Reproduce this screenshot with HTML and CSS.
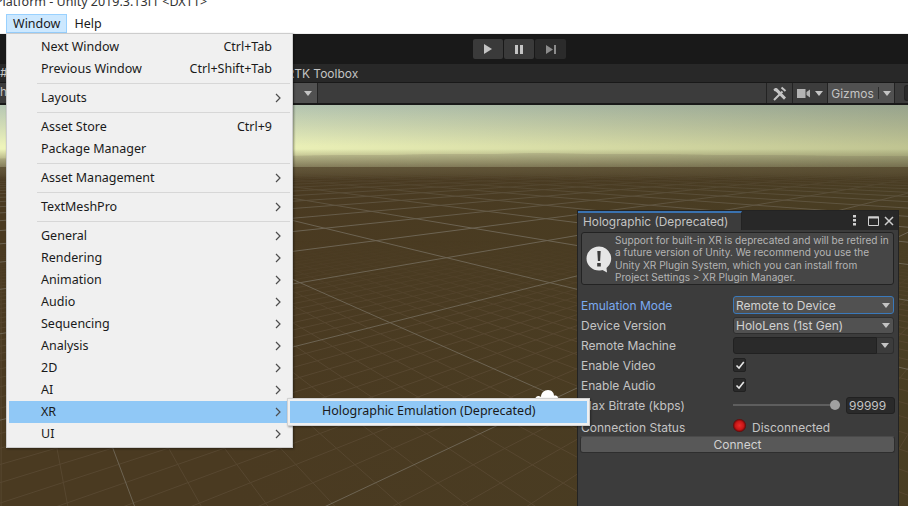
FILE: index.html
```html
<!DOCTYPE html>
<html lang="en">
<head>
    <meta charset="UTF-8">
    <meta name="viewport" content="width=device-width, initial-scale=1.0">
    <title>Unity - Window menu</title>
    <link rel="stylesheet" href="styles.css">
</head>
<body>
    <svg class="defs" width="0" height="0">
        <symbol id="chev" viewBox="0 0 6 10"><path d="M1 1l4 4-4 4" fill="none" stroke="#4d4d4d" stroke-width="1.2"/></symbol>
        <symbol id="tri" viewBox="0 0 8 5"><path d="M0 0h8L4 5z" fill="#c4c4c4"/></symbol>
        <symbol id="tick" viewBox="0 0 10 10"><path d="M1.5 5.5L4 8l4.8-6" fill="none" stroke="#e4e4e4" stroke-width="1.6"/></symbol>
    </svg>

    <div class="app">
        <div class="titlebar"><span>Platform - Unity 2019.3.13f1 &lt;DX11&gt;</span></div>

        <div class="menubar">
            <span class="menubar-item open">Window</span>
            <span class="menubar-item">Help</span>
        </div>

        <div class="toolbar">
            <div class="play-btn">
                <svg width="10" height="12" viewBox="0 0 10 12"><path d="M1 1v10l8-5z" fill="#c4c4c4"/></svg>
            </div>
            <div class="play-btn">
                <svg width="10" height="11" viewBox="0 0 10 11"><path d="M1 1h3v9H1zM6 1h3v9H6z" fill="#c4c4c4"/></svg>
            </div>
            <div class="play-btn step">
                <svg width="12" height="11" viewBox="0 0 12 11"><path d="M1 1v9l7-4.500zM9 1h2v9H9z" fill="#8c8c8c"/></svg>
            </div>
        </div>

        <div class="tabstrip">
            <span class="tab-stub">#</span>
            <span class="tab-label">MRTK Toolbox</span>
        </div>

        <div class="scene-toolbar">
            <span class="tab-stub">h</span>
            <div class="scene-drop">
                <svg class="tri" width="8" height="5"><use href="#tri"/></svg>
            </div>
            <div class="scene-tools">
                <div class="scene-tool tools">
                    <svg width="15" height="15" viewBox="0 0 15 15">
                        <path d="M2 14L10.500 5.500M9.500 1.500l4 3.500" fill="none" stroke="#c4c4c4" stroke-width="2"/>
                        <path d="M1.500 3.500c1-1.800 3.500-2 4.300-.6L14 11.500 12 13.800 3.800 5.500C2.800 5.600 1.800 4.700 1.500 3.500z" fill="#c4c4c4"/>
                    </svg>
                </div>
                <div class="scene-tool camera">
                    <svg width="13" height="9" viewBox="0 0 13 9"><path d="M0 0h8.500v9H0zM9.500 3L13 .5v8L9.500 6z" fill="#b4b4b4"/></svg>
                    <svg class="tri" width="8" height="5"><use href="#tri"/></svg>
                </div>
                <div class="scene-tool gizmos">
                    <span>Gizmos</span>
                    <i class="gizmos-sep"></i>
                    <svg class="tri" width="8" height="5"><use href="#tri"/></svg>
                </div>
                <div class="scene-search"></div>
            </div>
        </div>

        <div class="scene">
            <svg class="ground-grid" id="ground-grid" viewBox="0 104 908 402" width="908" height="402">
                <defs>
                    <linearGradient id="minor-fade" gradientUnits="userSpaceOnUse" x1="0" y1="240" x2="0" y2="320">
                        <stop offset="0" stop-color="#000"/>
                        <stop offset="1" stop-color="#fff"/>
                    </linearGradient>
                    <linearGradient id="major-fade" gradientUnits="userSpaceOnUse" x1="0" y1="178" x2="0" y2="225">
                        <stop offset="0" stop-color="#333"/>
                        <stop offset="1" stop-color="#fff"/>
                    </linearGradient>
                    <mask id="minor-mask" maskUnits="userSpaceOnUse" x="0" y="104" width="908" height="402">
                        <rect x="0" y="104" width="908" height="402" fill="url(#minor-fade)"/>
                    </mask>
                    <mask id="major-mask" maskUnits="userSpaceOnUse" x="0" y="104" width="908" height="402">
                        <rect x="0" y="104" width="908" height="402" fill="url(#major-fade)"/>
                    </mask>
                </defs>
                <g id="grid-minor" mask="url(#minor-mask)"></g>
                <g id="grid-major" mask="url(#major-mask)"></g>
            </svg>
            <div class="horizon"></div>
            <svg class="scene-camera" width="30" height="20" viewBox="0 0 30 20">
                <path d="M3 20c-3-2-3-7 1-8 1 0 2 0 3 1 0-4 3-7 7-7s6 3 6 6c2-1 4 0 4 2 2 0 4 1 4 3v3z" fill="#fff"/>
            </svg>
        </div>

        <div class="menu">
            <div class="menu-row"><span>Next Window</span><span class="shortcut">Ctrl+Tab</span></div>
            <div class="menu-row"><span>Previous Window</span><span class="shortcut">Ctrl+Shift+Tab</span></div>
            <div class="menu-sep"></div>
            <div class="menu-row"><span>Layouts</span><svg class="chev" width="6" height="10"><use href="#chev"/></svg></div>
            <div class="menu-sep"></div>
            <div class="menu-row"><span>Asset Store</span><span class="shortcut">Ctrl+9</span></div>
            <div class="menu-row"><span>Package Manager</span></div>
            <div class="menu-sep"></div>
            <div class="menu-row"><span>Asset Management</span><svg class="chev" width="6" height="10"><use href="#chev"/></svg></div>
            <div class="menu-sep"></div>
            <div class="menu-row"><span>TextMeshPro</span><svg class="chev" width="6" height="10"><use href="#chev"/></svg></div>
            <div class="menu-sep"></div>
            <div class="menu-row"><span>General</span><svg class="chev" width="6" height="10"><use href="#chev"/></svg></div>
            <div class="menu-row"><span>Rendering</span><svg class="chev" width="6" height="10"><use href="#chev"/></svg></div>
            <div class="menu-row"><span>Animation</span><svg class="chev" width="6" height="10"><use href="#chev"/></svg></div>
            <div class="menu-row"><span>Audio</span><svg class="chev" width="6" height="10"><use href="#chev"/></svg></div>
            <div class="menu-row"><span>Sequencing</span><svg class="chev" width="6" height="10"><use href="#chev"/></svg></div>
            <div class="menu-row"><span>Analysis</span><svg class="chev" width="6" height="10"><use href="#chev"/></svg></div>
            <div class="menu-row"><span>2D</span><svg class="chev" width="6" height="10"><use href="#chev"/></svg></div>
            <div class="menu-row"><span>AI</span><svg class="chev" width="6" height="10"><use href="#chev"/></svg></div>
            <div class="menu-row active"><span>XR</span><svg class="chev" width="6" height="10"><use href="#chev"/></svg></div>
            <div class="menu-row"><span>UI</span><svg class="chev" width="6" height="10"><use href="#chev"/></svg></div>
        </div>

        <div class="panel">
            <div class="panel-head">
                <div class="panel-tab">Holographic (Deprecated)</div>
                <div class="panel-actions">
                    <svg class="kebab" width="3" height="11" viewBox="0 0 3 11"><path d="M0 0h3v2.500H0zM0 4h3v2.500H0zM0 8h3v2.500H0z" fill="#d0d0d0"/></svg>
                    <svg width="11" height="10" viewBox="0 0 11 10"><path d="M.5 1h10v8.500H.5z" fill="none" stroke="#d0d0d0"/><path d="M0 .5h11v2H0z" fill="#d0d0d0"/></svg>
                    <svg width="10" height="10" viewBox="0 0 10 10"><path d="M1 1l8 8M9 1l-8 8" stroke="#d0d0d0" stroke-width="1.500"/></svg>
                </div>
            </div>

            <div class="help-box">
                <svg width="28" height="28" viewBox="0 0 28 28">
                    <path d="M14 1.500a12.500 12 0 1 0 0 24c1.500 0 3-.3 3.500-.5l4.500 2.500-.5-4.500A12 12 0 0 0 14 1.500z" fill="#e6e6e6"/>
                    <path d="M12.300 6h3.400l-.6 10h-2.200zM12.200 18h3.600v3.500h-3.600z" fill="#3c3c3c"/>
                </svg>
                <p>Support for built-in XR is deprecated and will be retired in a future version of Unity. We recommend you use the Unity XR Plugin System, which you can install from Project Settings &gt; XR Plugin Manager.</p>
            </div>

            <div class="fields">
                <div class="field-row">
                    <label class="focused">Emulation Mode</label>
                    <div class="select focused"><span>Remote to Device</span><svg class="tri" width="8" height="5"><use href="#tri"/></svg></div>
                </div>
                <div class="field-row">
                    <label>Device Version</label>
                    <div class="select"><span>HoloLens (1st Gen)</span><svg class="tri" width="8" height="5"><use href="#tri"/></svg></div>
                </div>
                <div class="field-row">
                    <label>Remote Machine</label>
                    <div class="combo">
                        <div class="combo-input"></div>
                        <div class="combo-btn"><svg class="tri" width="8" height="5"><use href="#tri"/></svg></div>
                    </div>
                </div>
                <div class="field-row">
                    <label>Enable Video</label>
                    <div class="check"><svg width="10" height="10"><use href="#tick"/></svg></div>
                </div>
                <div class="field-row">
                    <label>Enable Audio</label>
                    <div class="check"><svg width="10" height="10"><use href="#tick"/></svg></div>
                </div>
                <div class="field-row">
                    <label>Max Bitrate (kbps)</label>
                    <div class="slider">
                        <div class="slider-track"><i class="slider-thumb"></i></div>
                        <div class="slider-value">99999</div>
                    </div>
                </div>
                <div class="field-row status-row">
                    <label>Connection Status</label>
                    <div class="status"><i class="led"></i><span>Disconnected</span></div>
                </div>
            </div>

            <div class="connect-btn">Connect</div>
        </div>

        <div class="submenu">
            <div class="submenu-row">Holographic Emulation (Deprecated)</div>
        </div>
    </div>

    <script src="grid.js"></script>
</body>
</html>
```

FILE: styles.css
```css
html, body {
    margin: 0;
    padding: 0;
}
body {
    width: 908px;
    height: 506px;
    overflow: hidden;
    background: #fff;
}
.defs {
    position: absolute;
}
.app {
    position: relative;
    width: 908px;
    height: 506px;
    display: flex;
    flex-direction: column;
    overflow: hidden;
    font-family: Inter, "Noto Sans", sans-serif;
    font-size: 12px;
    color: #c4c4c4;
}

/* window chrome */
.titlebar {
    height: 14px;
    background: #fff;
    color: #333;
    font-family: "Noto Sans", sans-serif;
    font-size: 12.5px;
    line-height: 14px;
    overflow: hidden;
}
.titlebar span {
    display: block;
    margin: -5px 0 0 -5px;
    white-space: pre;
}
.menubar {
    height: 19px;
    background: #fff;
    border-bottom: 1px solid #f0f0f0;
    display: flex;
    padding-left: 6px;
    font-family: "Noto Sans", sans-serif;
    font-size: 12.5px;
    color: #1a1a1a;
}
.menubar-item {
    padding: 0 6px;
    border: 1px solid transparent;
    line-height: 17px;
}
.menubar-item.open {
    background: #cce8ff;
    border-color: #99d1ff;
}
.toolbar {
    height: 30px;
    background: #191919;
    display: flex;
    gap: 1px;
    align-items: center;
    padding-left: 473px;
}
.play-btn {
    width: 30px;
    height: 20px;
    background: #3a3a3a;
    display: flex;
    align-items: center;
    justify-content: center;
    border-radius: 2px;
}
.play-btn.step {
    width: 31px;
    background: #2b2b2b;
}
.tabstrip {
    height: 18px;
    background: #282828;
    border-bottom: 1px solid #191919;
    display: flex;
    align-items: center;
}
.tab-stub {
    line-height: 18px;
    color: #c4c4c4;
}
.tab-label {
    margin-left: 268px;
}
.scene-toolbar {
    height: 20px;
    background: #3c3c3c;
    border-bottom: 2px solid #191919;
    display: flex;
    align-items: stretch;
}
.scene-drop {
    margin-left: 287px;
    width: 24px;
    background: #515151;
    border-right: 1px solid #232323;
    display: flex;
    align-items: center;
    justify-content: flex-end;
    padding-right: 5px;
    box-sizing: border-box;
}
.scene-tools {
    margin-left: auto;
    display: flex;
}
.scene-tool {
    display: flex;
    align-items: center;
    justify-content: center;
    border-left: 1px solid #232323;
    box-sizing: border-box;
}
.tools {
    width: 26px;
}
.camera {
    width: 35px;
    gap: 5px;
}
.gizmos {
    width: 68px;
    background: #515151;
    gap: 4px;
    border-right: 1px solid #232323;
}
.gizmos-sep {
    width: 1px;
    height: 12px;
    background: #2e2e2e;
}
.scene-search {
    width: 3px;
    margin: 2px 0 2px 9px;
    background: #2a2a2a;
    border-radius: 3px 0 0 3px;
    border: 1px solid #232323;
    border-right: none;
}

/* scene view */
.scene {
    position: relative;
    flex: 1;
    overflow: hidden;
    background:
        linear-gradient(90deg, rgba(70, 70, 40, 0) 25%, rgba(70, 70, 40, 0.28) 100%),
        linear-gradient(#b6c7b4 0, #d3ddb6 22px, #eef4ba 41px, #eef4ba 44px, #4a3a21 74px, #4a3a21 100%);
}
.ground-grid {
    position: absolute;
    left: 0;
    top: 0;
}
.horizon {
    position: absolute;
    left: 0;
    right: 0;
    top: 62px;
    height: 24px;
    background: linear-gradient(rgba(74, 58, 33, 0.6), rgba(74, 58, 33, 0));
}
.scene-camera {
    position: absolute;
    left: 534px;
    top: 279px;
}

/* window menu */
.menu {
    position: absolute;
    left: 6px;
    top: 33px;
    width: 287px;
    box-sizing: border-box;
    padding: 2px;
    background: #f0f0f0;
    border: 1px solid #cdcdcd;
    box-shadow: 1px 1px 2px rgba(0, 0, 0, 0.4);
    font-family: "Noto Sans", sans-serif;
    font-size: 12.5px;
    color: #1a1a1a;
}
.menu-row {
    height: 22px;
    box-sizing: border-box;
    padding: 0 9px 1px 32px;
    display: flex;
    align-items: center;
    position: relative;
}
.menu-row.active {
    background: #90c8f6;
}
.shortcut {
    margin-left: auto;
    margin-right: 9px;
}
.chev {
    margin-left: auto;
}
.menu-sep {
    height: 1px;
    margin: 3px 0 3px 28px;
    background: #d7d7d7;
}
.submenu {
    position: absolute;
    left: 287px;
    top: 398px;
    width: 303px;
    box-sizing: border-box;
    padding: 2px;
    background: #f0f0f0;
    border: 1px solid #d2d2d2;
    box-shadow: 1px 1px 2px rgba(0, 0, 0, 0.4);
    font-family: "Noto Sans", sans-serif;
    font-size: 12.5px;
    color: #1a1a1a;
}
.submenu-row {
    height: 22px;
    line-height: 20px;
    padding-left: 32px;
    background: #90c8f6;
}

/* holographic panel */
.panel {
    position: absolute;
    left: 577px;
    top: 210px;
    width: 322px;
    bottom: 0;
    background: #3c3c3c;
    border: 1px solid #232323;
    border-bottom: none;
    box-sizing: border-box;
}
.panel-head {
    height: 19px;
    background: #282828;
    display: flex;
    align-items: stretch;
}
.panel-tab {
    width: 164px;
    box-sizing: border-box;
    background: #3c3c3c;
    border-top: 2px solid #3a72b0;
    border-right: 1px solid #232323;
    padding-left: 5px;
    line-height: 18px;
    font-size: 11.85px;
    color: #c4c4c4;
}
.panel-actions {
    margin-left: auto;
    display: flex;
    align-items: center;
    gap: 5px;
    padding-right: 4px;
}
.kebab {
    margin-right: 7px;
}
.help-box {
    margin: 2px 4px 0 3px;
    height: 53px;
    box-sizing: border-box;
    background: #464646;
    border: 1px solid #232323;
    border-radius: 3px;
    display: flex;
    align-items: center;
    padding-left: 3px;
    gap: 2px;
}
.help-box p {
    margin: 0;
    flex: 1;
    padding-right: 2px;
    font-size: 10.1px;
    line-height: 12.2px;
    color: #b4b4b4;
}
.fields {
    margin-top: 10px;
    padding: 0 3px;
    display: flex;
    flex-direction: column;
}
.field-row {
    height: 20px;
    display: flex;
    align-items: center;
}
.field-row label {
    width: 152px;
    flex: none;
}
label.focused {
    color: #7baaf0;
}
.select {
    width: 161px;
    height: 17px;
    box-sizing: border-box;
    background: #515151;
    border: 1px solid #2e2e2e;
    border-radius: 3px;
    display: flex;
    align-items: center;
    justify-content: space-between;
    padding: 0 3px 0 2px;
    color: #d2d2d2;
}
.select.focused {
    border-color: #3a79bb;
    height: 18px;
}
.combo {
    width: 161px;
    height: 17px;
    display: flex;
}
.combo-input {
    flex: 1;
    background: #2a2a2a;
    border: 1px solid #212121;
    border-radius: 3px 0 0 3px;
}
.combo-btn {
    width: 17px;
    box-sizing: border-box;
    background: #3c3c3c;
    border: 1px solid #2e2e2e;
    border-left: none;
    border-radius: 0 3px 3px 0;
    display: flex;
    align-items: center;
    justify-content: center;
}
.check {
    width: 13px;
    height: 14px;
    box-sizing: border-box;
    background: #2a2a2a;
    border: 1px solid #212121;
    border-radius: 2px;
    display: flex;
    align-items: center;
    justify-content: center;
}
.slider {
    width: 162px;
    display: flex;
    align-items: center;
}
.slider-track {
    width: 107px;
    height: 2px;
    background: #5e5e5e;
    position: relative;
}
.slider-thumb {
    position: absolute;
    right: 0;
    top: -4px;
    width: 10px;
    height: 10px;
    border-radius: 50%;
    background: #a0a0a0;
}
.slider-value {
    width: 49px;
    height: 17px;
    margin-left: 6px;
    box-sizing: border-box;
    background: #2a2a2a;
    border: 1px solid #212121;
    border-radius: 3px;
    padding-left: 2px;
    line-height: 15px;
}
.status-row {
    height: 21px;
    align-items: flex-end;
    padding-bottom: 1px;
    box-sizing: border-box;
}
.status-row label {
    line-height: 14px;
}
.status {
    display: flex;
    align-items: flex-end;
    gap: 6px;
}
.led {
    width: 13px;
    height: 13px;
    margin-bottom: 3px;
    border-radius: 50%;
    background: radial-gradient(#e82c2c 0, #c81616 45%, #5a0808 70%, #111 100%);
}
.connect-btn {
    margin: 0 3px 0 2px;
    height: 15px;
    background: #585858;
    border: 1px solid #2e2e2e;
    border-top-color: #4a4a4a;
    border-radius: 3px;
    text-align: center;
    line-height: 15px;
    color: #d2d2d2;
}
```

FILE: grid.js
```js
// ground plane: square-to-quad homography fitted on one major cell
const corners = [[390, 321.7], [550, 281.7], [446.7, 256.7], [300, 281.7]];

function makeHomography(p) {
    const dx1 = p[1][0] - p[2][0], dx2 = p[3][0] - p[2][0];
    const dy1 = p[1][1] - p[2][1], dy2 = p[3][1] - p[2][1];
    const sx = p[0][0] - p[1][0] + p[2][0] - p[3][0];
    const sy = p[0][1] - p[1][1] + p[2][1] - p[3][1];
    const den = dx1 * dy2 - dx2 * dy1;
    const g = (sx * dy2 - dx2 * sy) / den;
    const h = (dx1 * sy - sx * dy1) / den;
    return {
        a: p[1][0] - p[0][0] + g * p[1][0], b: p[3][0] - p[0][0] + h * p[3][0], c: p[0][0],
        d: p[1][1] - p[0][1] + g * p[1][1], e: p[3][1] - p[0][1] + h * p[3][1], f: p[0][1],
        g, h
    };
}

const H = makeHomography(corners);
const MIN_W = 0.06;

function project(u, v) {
    const w = H.g * u + H.h * v + 1;
    return [(H.a * u + H.b * v + H.c) / w, (H.d * u + H.e * v + H.f) / w];
}

// clip a grid line (u,v) + t(du,dv) to the part in front of the camera
function lineMarkup(u0, v0, du, dv, color) {
    let tMin = -60, tMax = 60;
    const w0 = H.g * u0 + H.h * v0 + 1;
    const dw = H.g * du + H.h * dv;
    if (dw !== 0) {
        const t = (MIN_W - w0) / dw;
        if (dw > 0) tMin = Math.max(tMin, t); else tMax = Math.min(tMax, t);
    } else if (w0 < MIN_W) {
        return '';
    }
    if (tMin >= tMax) return '';
    const a = project(u0 + du * tMin, v0 + dv * tMin);
    const b = project(u0 + du * tMax, v0 + dv * tMax);
    return `<line x1="${a[0].toFixed(1)}" y1="${a[1].toFixed(1)}" x2="${b[0].toFixed(1)}" y2="${b[1].toFixed(1)}" stroke="${color}"/>`;
}

let major = '', minor = '';
for (let i = -60; i <= 60; i++) {
    major += lineMarkup(i, 0, 0, 1, '#6d6453');
    major += lineMarkup(0, i, 1, 0, '#6d6453');
}
for (let i = -120; i <= 120; i++) {
    if (i % 10 === 0) continue;
    minor += lineMarkup(i / 10, 0, 0, 1, '#574730');
    minor += lineMarkup(0, i / 10, 1, 0, '#574730');
}
document.getElementById('grid-major').innerHTML = major;
document.getElementById('grid-minor').innerHTML = minor;
```
